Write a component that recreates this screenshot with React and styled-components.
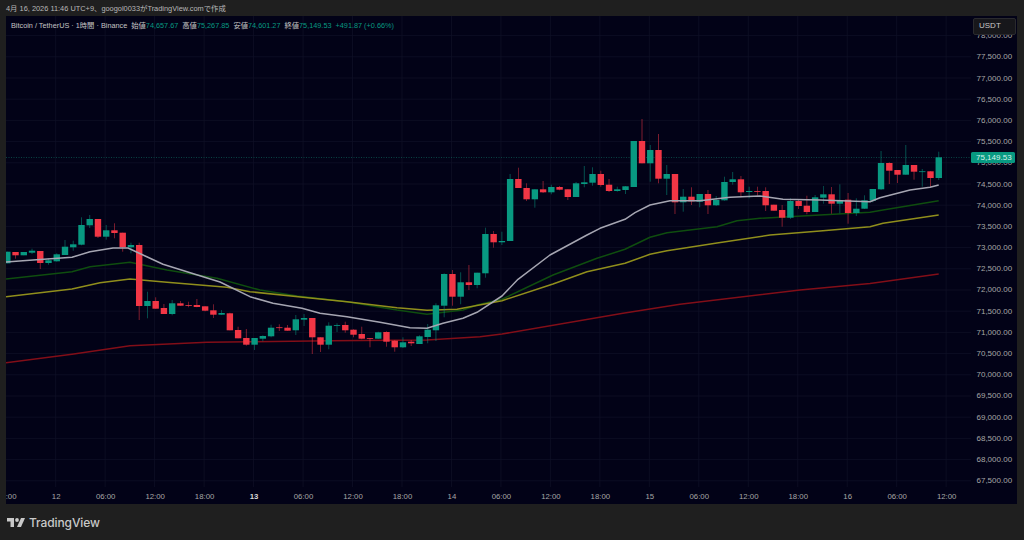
import React from "react";
import styled, { createGlobalStyle } from "styled-components";

// candles in page pixels: [colour, bodyTop, bodyBottom, wickTop, wickBottom]
const candles = [
  ["g", 251.7, 263.3, 251.7, 263.3], ["r", 252, 255.3, 252, 258.7], ["g", 252, 255.3, 252, 255.3],
  ["g", 250.7, 252.7, 248.7, 254], ["r", 251, 263, 251, 269], ["g", 260.3, 263, 258.3, 264.7],
  ["g", 254.3, 261.3, 253.3, 261.7], ["g", 246.7, 255, 240, 255], ["g", 244.3, 247.3, 240.7, 250.7],
  ["g", 225, 244.7, 217.3, 245.3], ["g", 219, 225.3, 215, 228], ["r", 219, 236.7, 219, 238],
  ["g", 230.3, 236.7, 225, 239.7], ["r", 230.3, 233, 223.3, 238.3], ["r", 232.7, 247.3, 232.7, 251.7],
  ["g", 245, 247.3, 242.7, 253.3], ["r", 245, 306, 242.7, 320], ["g", 301, 306, 291.7, 318.3],
  ["r", 301, 308.7, 297.3, 308.7], ["r", 308, 314, 304, 314], ["g", 303.3, 314, 300, 315.3],
  ["r", 303.3, 305.7, 301, 306], ["r", 305, 305.7, 301.7, 307.3], ["r", 305, 307, 299, 307.3],
  ["r", 306.3, 310.7, 306.3, 311.3], ["r", 310.3, 314.7, 304.3, 318], ["g", 313, 314.7, 310, 315],
  ["r", 313.3, 330.3, 312.7, 330.3], ["r", 330, 338.3, 326.7, 338.3], ["r", 338, 344.7, 329, 345.7],
  ["g", 338, 344.7, 338, 350], ["g", 336, 338.7, 335.3, 341.3], ["g", 327.7, 336.3, 324.7, 337.3],
  ["r", 327.3, 328, 324.3, 331], ["r", 327.7, 330.7, 325, 330.7], ["g", 319.3, 330.3, 315, 335],
  ["g", 318, 319.7, 314, 326], ["r", 318, 337.3, 318, 354], ["r", 337.3, 344.7, 337.3, 352],
  ["g", 325.7, 344.7, 322.3, 349.3], ["g", 325, 325.7, 323.3, 332], ["r", 325, 330.3, 321.7, 332.7],
  ["r", 329.7, 334.7, 329.3, 337.3], ["r", 334, 338.7, 326.7, 339.3], ["r", 338, 338.7, 338, 347.3],
  ["g", 332.3, 338.7, 331.7, 339], ["r", 332, 341.7, 331.3, 346.7], ["r", 340.7, 347.3, 340, 351.7],
  ["g", 342.3, 347.3, 337.3, 348], ["r", 341.7, 343.3, 340, 346], ["g", 336.3, 344, 335.3, 344],
  ["g", 329.7, 337, 324, 343.3], ["g", 305.3, 330.3, 303.3, 341], ["g", 274, 305.7, 273.3, 317.3],
  ["r", 274, 296.7, 270, 305.7], ["g", 282.3, 296.7, 272.3, 304.3], ["r", 282.3, 285, 265, 290],
  ["g", 272.7, 285, 272.7, 288.3], ["g", 234, 273.3, 227.7, 277.7], ["r", 234, 242.3, 231, 247.7],
  ["g", 241, 242.3, 231.7, 245], ["g", 179, 241, 174, 241], ["r", 179, 188, 167.7, 188],
  ["r", 188, 199.3, 183.3, 201], ["g", 189.3, 199.3, 189.3, 207.7], ["r", 189.3, 192.3, 181, 193],
  ["g", 187, 192.3, 184.7, 194.3], ["r", 187, 189.7, 186, 190.3], ["r", 189.3, 197, 189.3, 200],
  ["g", 183.3, 197, 182, 197], ["g", 182.3, 184, 166, 187.3], ["g", 174, 182.7, 167.3, 185.7],
  ["r", 174, 185, 170.7, 186.7], ["r", 184.7, 191, 179, 192], ["g", 189.3, 191, 186.7, 191.7],
  ["g", 186.3, 190, 186, 194], ["g", 141, 187, 141, 187], ["r", 141, 163.3, 119, 163.3],
  ["g", 150, 163.3, 145, 181.7], ["r", 150, 178.7, 134, 183.3], ["g", 174, 178.7, 165, 195],
  ["r", 174, 202.3, 174, 214], ["g", 196.7, 202.3, 189, 211.7], ["r", 196.7, 201.3, 187.3, 205],
  ["g", 194, 201.7, 194, 207.3], ["r", 194, 205.3, 190, 214], ["g", 200, 205.3, 196, 206],
  ["g", 182, 200.3, 176.7, 200.7], ["g", 179.3, 182, 172, 184.7], ["r", 179.3, 192.3, 176, 197.3],
  ["g", 191, 192, 186.7, 198.3], ["r", 191, 191.7, 186.7, 195.7], ["r", 191, 205.3, 187.3, 211],
  ["r", 204.7, 210.7, 204.7, 210.7], ["r", 210, 217.7, 205, 226.7], ["g", 201, 217.7, 198.3, 219],
  ["r", 201, 206, 199.3, 209], ["r", 205.7, 212, 195.7, 214.3], ["g", 197.3, 212, 195, 212],
  ["g", 194.3, 197.7, 186, 203.7], ["r", 194.3, 203.7, 187, 213.7], ["g", 200, 203.7, 184.3, 213.3],
  ["r", 199.7, 213, 193, 223.7], ["g", 208.7, 213, 198.3, 216], ["g", 200.3, 208.7, 195.3, 209],
  ["g", 189, 200.7, 189, 202.3], ["g", 163, 189.3, 151, 190], ["r", 163, 170.7, 162.3, 184],
  ["r", 170, 174.7, 170, 183], ["g", 165, 174.7, 145, 174.7], ["r", 165, 171.7, 165, 179.7],
  ["g", 171.3, 172, 169, 186.7], ["r", 171.3, 178, 171.3, 186.7], ["g", 157.3, 178, 151.7, 180]
];

const lines = [
  {
    color: "#820e18",
    points: "6,362.7 72,354.3 130,345.7 207,342.3 250,341.7 330,340.7 427,340 480,336.7 502,334 623,313.3 680,304.3 800,290 870,283.5 938.7,274"
  },
  {
    color: "#0f4d0f",
    points: "6,279 72,271.7 90,266.7 130,262.3 167,270 217,278.3 260,290 297,296 347,301.7 397,310 427,314.3 463,310 477,305 502,299.3 553,275 597,258.3 625,249.3 650,237.3 667,232.7 717,226.7 737,220.7 760,218.3 820,215 870,212.3 883,210 938.7,200.7"
  },
  {
    color: "#908e1c",
    points: "6,296.7 72,289 100,282.7 130,279 167,282.3 227,287.3 250,291.7 303,297.3 347,301.7 397,307.7 427,310.3 457,309.3 502,300.7 553,284 587,271.7 625,263.3 650,254.3 667,250.7 680,248.7 717,243 770,235 820,231 870,226.7 883,223.3 938.7,215"
  },
  {
    color: "#a6a6b2",
    points: "6,262 33,260 72,257.3 90,251.7 113,248 128,248 143,255 163,264.3 187,271.7 220,282 250,296.7 273,303.3 302,308.3 320,313.3 347,316.7 380,322.3 410,327.7 427,328.3 443,323.3 463,318.3 477,312.3 502,296 518,279.3 550,255 587,235 600,228.3 625,219.3 635,212.7 650,205 670,200.7 700,200.7 730,197.3 760,196 783,199.3 820,200 870,201.7 880,197.7 910,190 930,187.3 938.7,185"
  }
];

const prices = [
  "78,000.00", "77,500.00", "77,000.00", "76,500.00", "76,000.00", "75,500.00", "75,000.00",
  "74,500.00", "74,000.00", "73,500.00", "73,000.00", "72,500.00", "72,000.00", "71,500.00",
  "71,000.00", "70,500.00", "70,000.00", "69,500.00", "69,000.00", "68,500.00", "68,000.00", "67,500.00"
];

const times = [
  "06:00", "12", "06:00", "12:00", "18:00", "13", "06:00", "12:00", "18:00", "14", "06:00",
  "12:00", "18:00", "15", "06:00", "12:00", "18:00", "16", "06:00", "12:00"
];

const Global = createGlobalStyle`
  html, body {
    margin: 0;
    background: #1f1f1f;
  }
`;

const Page = styled.div`
  width: 1024px;
  height: 540px;
  overflow: hidden;
  display: flex;
  flex-direction: column;
  font-family: "Liberation Sans", "Noto Sans CJK JP", sans-serif;
`;

const Caption = styled.div`
  height: 16px;
  padding-left: 6px;
  font-size: 7.4px;
  line-height: 18px;
  color: #b8b8b8;
`;

const Frame = styled.div`
  position: relative;
  width: 1011px;
  height: 488px;
  margin-left: 6px;
  background: #020217;
  display: grid;
  grid-template-columns: 965px 46px;
  grid-template-rows: 471px 17px;
  overflow: hidden;
`;

const Plot = styled.svg`
  display: block;
  width: 965px;
  height: 471px;
`;

const Legend = styled.div`
  position: absolute;
  top: 5px;
  left: 5px;
  display: flex;
  font-size: 7.3px;
  line-height: 10px;
  color: #c4c4c4;
`;

const Title = styled.span`
  margin-right: 4px;
`;

const Quote = styled.span`
  margin-right: 4px;
  white-space: nowrap;
`;

const Value = styled.span`
  color: #089981;
`;

const PriceScale = styled.div`
  grid-column: 2;
  grid-row: 1 / 3;
  padding-top: 9.2px;
`;

const PriceLabel = styled.div`
  height: 21.2px;
  line-height: 21.2px;
  padding-left: 5.5px;
  font-size: 8px;
  color: #a6a6a6;
`;

const TimeScale = styled.div`
  grid-column: 1;
  grid-row: 2;
  min-width: 0;
  display: grid;
  grid-auto-flow: column;
  grid-auto-columns: 49.47px;
  margin-left: -24px;
`;

const TimeLabel = styled.div`
  text-align: center;
  font-size: 7.8px;
  line-height: 19px;
  color: ${(p) => (p.$day ? "#d8d8d8" : "#a6a6a6")};
  font-weight: ${(p) => (p.$day ? 700 : 400)};
`;

const Unit = styled.div`
  position: absolute;
  top: 2px;
  right: 1px;
  width: 43px;
  height: 17px;
  box-sizing: border-box;
  padding-left: 5px;
  border: 1px solid #2a2a2e;
  border-radius: 2px;
  background: #17171b;
  font-size: 8px;
  line-height: 14px;
  color: #c8c8c8;
`;

const PriceTag = styled.div`
  position: absolute;
  top: 136px;
  left: 965px;
  width: 44px;
  height: 11px;
  border-radius: 1.5px;
  background: #089981;
  padding-left: 5px;
  box-sizing: border-box;
  font-size: 8px;
  line-height: 11px;
  color: #d6f2ec;
`;

const Brand = styled.div`
  display: flex;
  align-items: center;
  gap: 4px;
  height: 36px;
  padding-left: 7px;
  font-family: Inter, "Liberation Sans", sans-serif;
  font-size: 12px;
  font-weight: 500;
  letter-spacing: -0.1px;
  color: #c9c9c9;
`;

function Logo() {
  return (
    <svg width="18" height="9" viewBox="0 0 36 18" fill="#c9c9c9">
      <path d="M14 18H7V7H0V0h14v18z" />
      <circle cx="20" cy="4" r="3.8" />
      <path d="M28 0h8l-8 18h-8l8-18z" />
    </svg>
  );
}

function Chart() {
  const gridX = Array.from({ length: 19 }, (_, i) => 55.7 + i * 49.47);
  const gridY = prices.map((_, i) => 35.6 + i * 21.2);

  return (
    <Plot viewBox="6 16 965 471">
      {gridX.map((x) => (
        <line key={x} x1={x} x2={x} y1="16" y2="487" stroke="#0f1026" strokeWidth="0.8" />
      ))}
      {gridY.map((y) => (
        <line key={y} x1="6" x2="971" y1={y} y2={y} stroke="#0f1026" strokeWidth="0.8" />
      ))}
      <line x1="6" x2="971" y1="157.5" y2="157.5" stroke="#0b5f55" strokeWidth="0.7" strokeDasharray="1 1.5" />
      {lines.slice(0, 3).map((l) => (
        <polyline key={l.color} points={l.points} fill="none" stroke={l.color} strokeWidth="1.5" strokeLinejoin="round" />
      ))}
      {candles.map(([c, top, bottom, wickTop, wickBottom], i) => {
        const x = 7.3 + i * 8.243;
        const color = c === "g" ? "#089981" : "#f23645";
        return (
          <g key={i}>
            <line x1={x} x2={x} y1={wickTop} y2={wickBottom} stroke={color} strokeWidth="0.7" opacity="0.75" />
            <rect x={x - 3.2} y={top} width="6.4" height={Math.max(bottom - top, 0.8)} fill={color} />
          </g>
        );
      })}
      <polyline points={lines[3].points} fill="none" stroke={lines[3].color} strokeWidth="1.5" strokeLinejoin="round" />
    </Plot>
  );
}

export default function App() {
  return (
    <Page>
      <Global />
      <Caption>4月 16, 2026 11:46 UTC+9、googol0033がTradingView.comで作成</Caption>
      <Frame>
        <Chart />
        <PriceScale>
          {prices.map((p) => (
            <PriceLabel key={p}>{p}</PriceLabel>
          ))}
        </PriceScale>
        <TimeScale>
          {times.map((t, i) => (
            <TimeLabel key={i} $day={t === "13"}>
              {t}
            </TimeLabel>
          ))}
        </TimeScale>
        <Legend>
          <Title>Bitcoin / TetherUS · 1時間 · Binance</Title>
          <Quote>始値<Value>74,657.67</Value></Quote>
          <Quote>高値<Value>75,267.85</Value></Quote>
          <Quote>安値<Value>74,601.27</Value></Quote>
          <Quote>終値<Value>75,149.53</Value></Quote>
          <Value>+491.87 (+0.66%)</Value>
        </Legend>
        <Unit>USDT</Unit>
        <PriceTag>75,149.53</PriceTag>
      </Frame>
      <Brand>
        <Logo />
        TradingView
      </Brand>
    </Page>
  );
}
